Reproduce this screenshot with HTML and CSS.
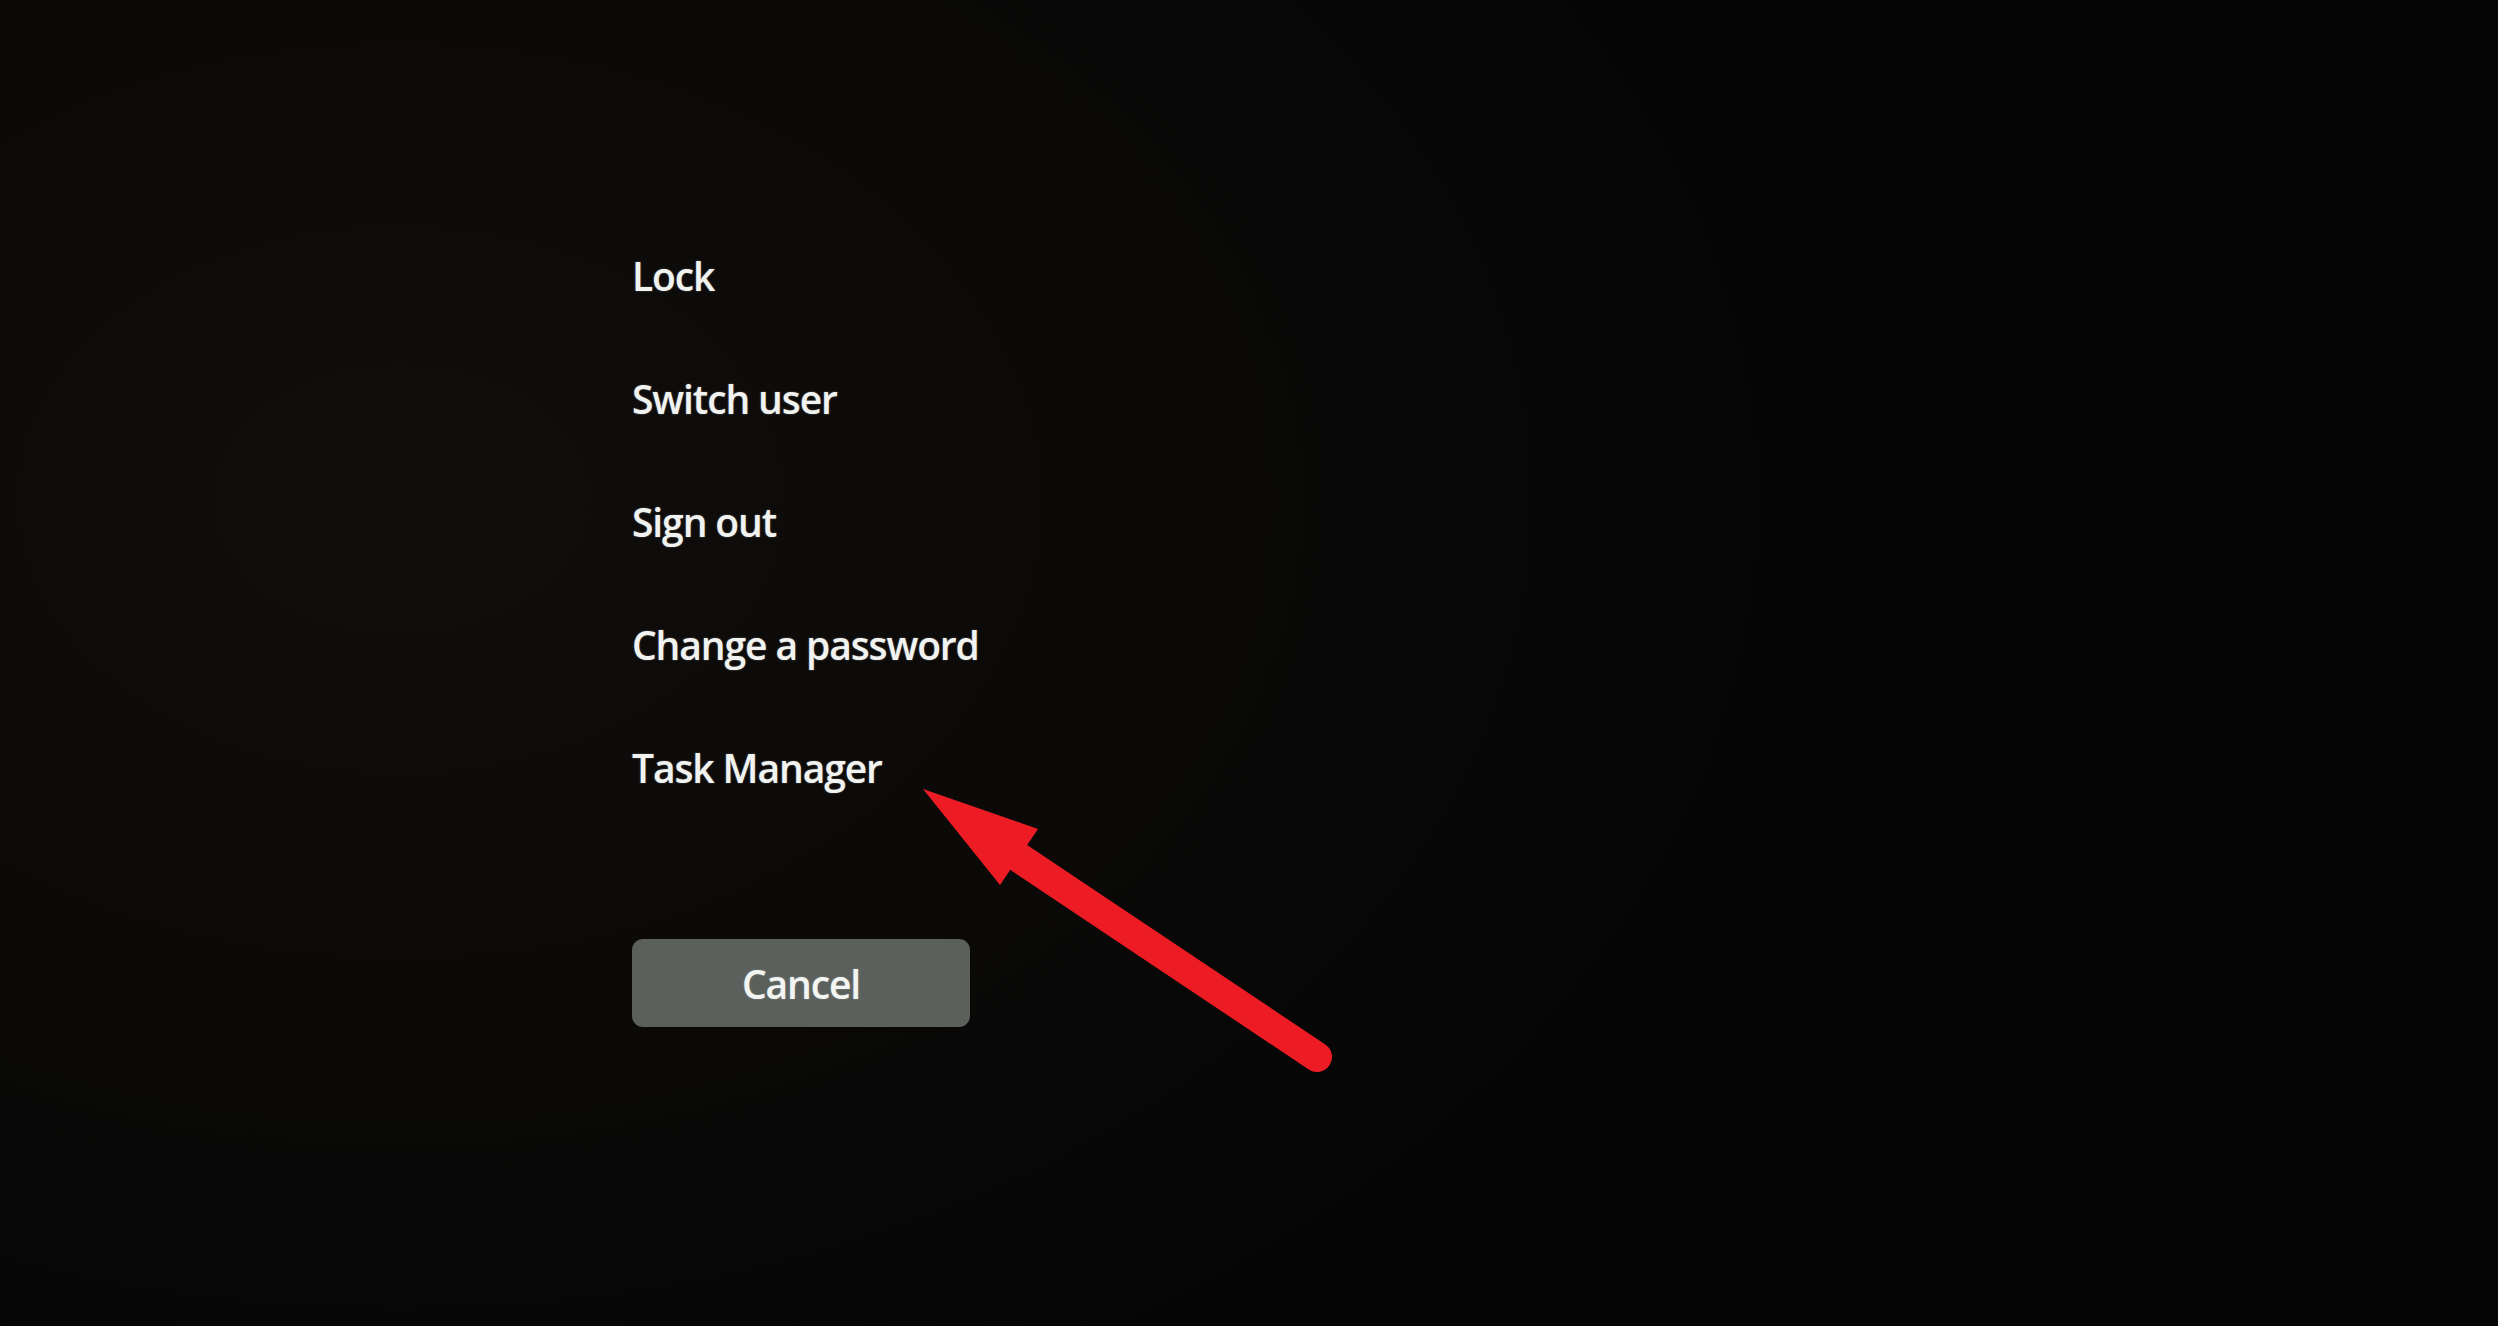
FILE: index.html
```html
<!DOCTYPE html>
<html lang="en">
<head>
<meta charset="utf-8">
<title>Security options</title>
<link rel="stylesheet" href="styles.css">
</head>
<body>
<main class="screen">
  <nav class="options">
    <a class="option">Lock</a>
    <a class="option">Switch user</a>
    <a class="option">Sign out</a>
    <a class="option">Change a password</a>
    <a class="option">Task Manager</a>
  </nav>
  <button class="cancel">Cancel</button>
  <svg class="annotation" width="2498" height="1326" viewBox="0 0 2498 1326" aria-hidden="true">
    <line x1="1317" y1="1057" x2="1018" y2="857" stroke="#ed1c24" stroke-width="30" stroke-linecap="round"/>
    <polygon points="923,789 1038,829 1000,885" fill="#ed1c24"/>
  </svg>
</main>
</body>
</html>
```
FILE: styles.css
```css
html, body {
  margin: 0;
  padding: 0;
  width: 2498px;
  height: 1326px;
  overflow: hidden;
}
body {
  background: radial-gradient(ellipse 1400px 1000px at 400px 500px, #110e0c 0%, #0a0908 60%, #050505 100%);
  font-family: "Open Sans", "Noto Sans", "Liberation Sans", sans-serif;
  color: #f1f3f1;
}
.screen {
  position: relative;
  width: 2498px;
  height: 1326px;
  box-sizing: border-box;
  padding: 214px 0 0 632px;
  display: flex;
  flex-direction: column;
  align-items: flex-start;
}
.options {
  display: flex;
  flex-direction: column;
  align-items: flex-start;
}
.option {
  font-size: 39px;
  font-weight: 600;
  line-height: 123px;
  height: 123px;
  display: flex;
  align-items: center;
  letter-spacing: -1.1px;
  text-shadow: 0 0 2px rgba(255,255,255,0.35);
  cursor: default;
}
.cancel {
  margin-top: 110px;
  width: 338px;
  height: 88px;
  border: none;
  border-radius: 11px;
  background: #5b605d;
  color: #f3f5f3;
  font-family: "Open Sans", "Noto Sans", "Liberation Sans", sans-serif;
  font-size: 39px;
  font-weight: 600;
  letter-spacing: -1.1px;
  text-shadow: 0 0 2px rgba(255,255,255,0.3);
  padding: 0;
}
.annotation {
  position: absolute;
  top: 0;
  left: 0;
}
```
